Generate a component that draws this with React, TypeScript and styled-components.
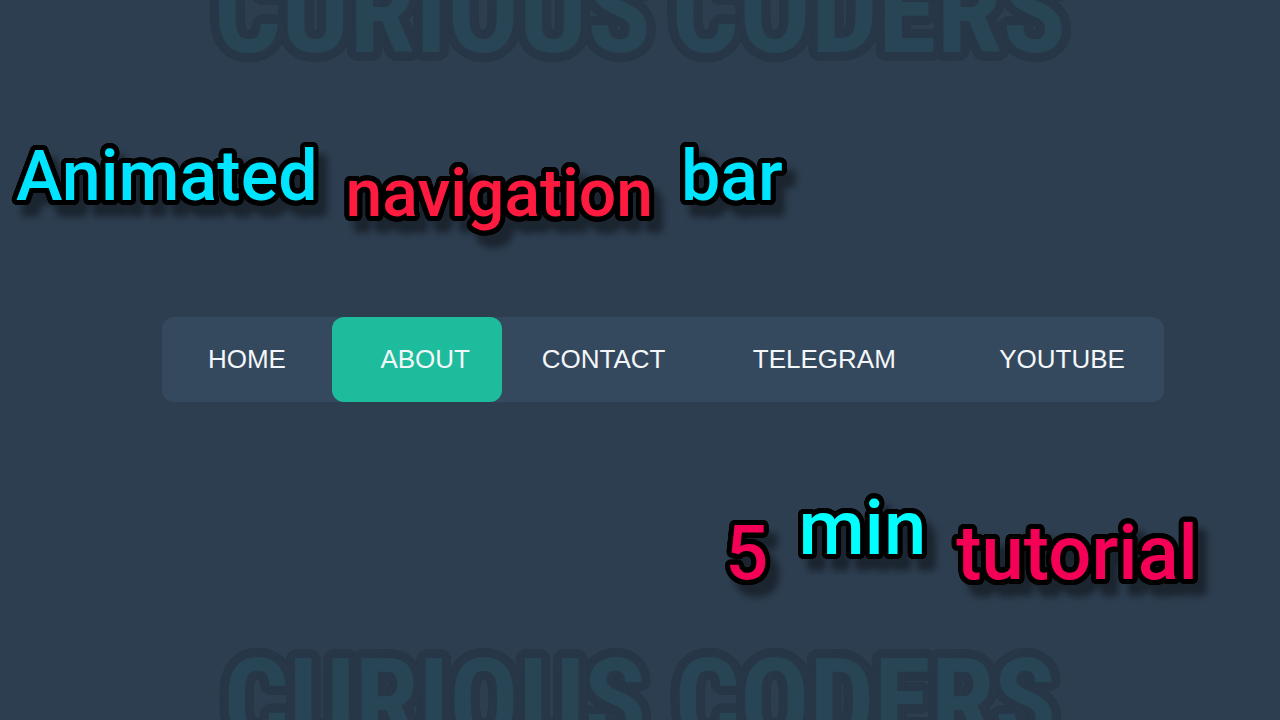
import React from "react";
import styled, { createGlobalStyle } from "styled-components";

// Rounded text outline: a ring of hard shadows around every glyph.
const outline = (radius: number, color: string, steps = 32) =>
  Array.from({ length: steps }, (_, i) => {
    const angle = (i / steps) * Math.PI * 2;
    const x = (Math.cos(angle) * radius).toFixed(2);
    const y = (Math.sin(angle) * radius).toFixed(2);
    return `${x}px ${y}px 0 ${color}`;
  }).join(", ");

const GlobalStyle = createGlobalStyle`
  *, *::before, *::after { box-sizing: border-box; }
  body {
    margin: 0;
    background: #2d3e50;
    font-family: "Liberation Sans", Arial, sans-serif;
  }
`;

const Page = styled.main`
  display: flex;
  flex-direction: column;
  height: 100vh;
  overflow: hidden;
`;

const Watermark = styled.div<{ $size: number; $gap: number }>`
  display: flex;
  justify-content: center;
  gap: ${({ $gap }) => $gap}px;
  overflow: hidden;
  color: #284555;
  font-family: "Roboto Condensed", Roboto, sans-serif;
  font-size: ${({ $size }) => $size}px;
  font-weight: 700;
  line-height: 120px;
  white-space: nowrap;
  text-shadow: ${outline(9, "#273748")}, ${outline(5, "#273748")};
`;

const TopWatermark = styled(Watermark)`
  flex: none;
  align-items: flex-end;
  height: 72px;
`;

const BottomWatermark = styled(Watermark)`
  flex: 1;
  align-items: flex-start;
  margin-top: 48px;
`;

const Headline = styled.h1<{ $align: "start" | "end"; $gap: number }>`
  display: flex;
  justify-content: flex-${({ $align }) => $align};
  align-items: flex-start;
  gap: ${({ $gap }) => $gap}px;
  margin: 0;
  padding: 0 82px 0 16px;
  font-family: Roboto, sans-serif;
  font-weight: 500;
  line-height: 80px;
  white-space: nowrap;
  filter: drop-shadow(9px 12px 3px rgba(0, 0, 0, 0.4));
`;

const Title = styled(Headline)`
  margin-top: 64px;
`;

const Word = styled.span<{ $color: string; $size: number; $drop?: number }>`
  padding-top: ${({ $drop = 0 }) => $drop}px;
  color: ${({ $color }) => $color};
  font-size: ${({ $size }) => $size}px;
  text-shadow: ${outline(5, "#000")}, ${outline(3, "#000", 16)};
`;

const NavBar = styled.nav`
  position: relative;
  display: grid;
  grid-template-columns: 10fr 11fr 10fr 16fr 12fr;
  margin: 83px 116px 86px 162px;
  border-radius: 12px;
  background: #35495e;
`;

const Indicator = styled.span`
  position: absolute;
  top: 0;
  bottom: 0;
  left: calc(100% * 10 / 59);
  width: calc(100% * 10 / 59);
  border-radius: 12px;
  background: #1dbc9c;
`;

const NavLink = styled.a`
  position: relative;
  color: #f4f7fa;
  font-size: 26px;
  line-height: 85px;
  text-align: center;
  text-decoration: none;
  text-transform: uppercase;
`;

const links = ["Home", "About", "Contact", "Telegram", "Youtube"];

export default function App() {
  return (
    <>
      <GlobalStyle />
      <Page>
        <TopWatermark $size={119} $gap={20}>
          <span>CURIOUS</span>
          <span>CODERS</span>
        </TopWatermark>
        <Title $align="start" $gap={28}>
          <Word $color="#00e5ff" $size={70}>Animated</Word>
          <Word $color="#ff1a40" $size={66} $drop={18}>navigation</Word>
          <Word $color="#00e5ff" $size={70}>bar</Word>
        </Title>
        <NavBar>
          <Indicator />
          {links.map((label) => (
            <NavLink key={label} href={`#${label.toLowerCase()}`}>{label}</NavLink>
          ))}
        </NavBar>
        <Headline as="h2" $align="end" $gap={30}>
          <Word $color="#f50057" $size={76} $drop={25}>5</Word>
          <Word $color="#00ffff" $size={76}>min</Word>
          <Word $color="#f50057" $size={76} $drop={25}>tutorial</Word>
        </Headline>
        <BottomWatermark $size={115} $gap={28}>
          <span>CURIOUS</span>
          <span>CODERS</span>
        </BottomWatermark>
      </Page>
    </>
  );
}
